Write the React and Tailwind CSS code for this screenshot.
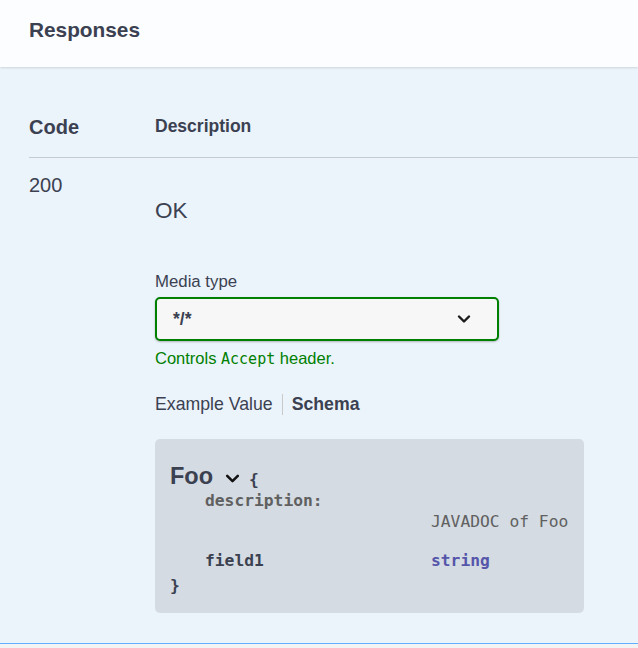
import React from 'react';

const sans = { fontFamily: '"Liberation Sans", Arial, sans-serif' };

function Chevron({ className }) {
  return (
    <svg viewBox="0 0 16 16" className={className} fill="none" stroke="currentColor" strokeWidth="2.4" strokeLinecap="round" strokeLinejoin="round">
      <path d="M3 5.5l5 5 5-5" />
    </svg>
  );
}

export default function App() {
  return (
    <div className="min-h-[648px] w-[638px] overflow-hidden bg-[#f3f3f3] text-[#3b4151]" style={sans}>
      <div className="border-b border-[#61affe] bg-[#ebf3fb] pb-[30px]">
        <div className="flex h-[67px] items-center bg-[#fbfdfe] px-[29px] pb-[8px] shadow-[0_1px_2px_rgba(0,0,0,0.12)]">
          <h4 className="text-[20.8px] font-bold">Responses</h4>
        </div>

        <div className="pl-[29px]">
          <div className="flex items-center border-b border-[#c5cad3] pt-[48px] pb-[18px]">
            <div className="w-[126px] text-[20px] font-bold leading-[24px]">Code</div>
            <div className="text-[17.5px] font-bold leading-[24px] -mt-[2px]">Description</div>
          </div>

          <div className="flex">
            <div className="w-[126px] pt-[15px] text-[20px] leading-[24px]">200</div>
            <div className="flex flex-col">
              <div className="mt-[39px] text-[22.5px] leading-[28px]">OK</div>

              <div className="mt-[46px] text-[16.8px] leading-[22px]">Media type</div>
              <div className="mt-[4px] flex h-[44px] w-[344px] items-center justify-between rounded-[5px] border-2 border-[#008000] bg-[#f7f7f7] pl-[16px] pr-[25px] shadow-[0_1px_2px_rgba(0,0,0,0.25)]">
                <span className="text-[17.5px] font-bold">*/*</span>
                <Chevron className="h-[16px] w-[16px] text-[#1b1b1b]" />
              </div>
              <div className="mt-[6px] text-[16.5px] leading-[22px] text-[#008000]">
                Controls <code className="font-['DejaVu_Sans_Mono',monospace] text-[15px]">Accept</code> header.
              </div>

              <div className="mt-[22px] flex items-center text-[17.7px] leading-[24px]">
                <span>Example Value</span>
                <span className="mx-[9px] h-[21px] w-px bg-[#c9c9c9]" />
                <span className="font-bold">Schema</span>
              </div>

              <div className="mt-[23px] w-[429px] rounded-[5px] bg-[#d4dbe2] pt-[25px] pb-[16px] pl-[15px] font-['DejaVu_Sans_Mono',monospace] text-[16.3px]">
                <div className="flex h-[26px] items-center">
                  <span className="text-[23.5px] font-bold" style={sans}>Foo</span>
                  <Chevron className="ml-[11px] mt-[2px] h-[17px] w-[17px] text-[#111]" />
                  <span className="ml-[8px] mt-[6px] font-bold">{'{'}</span>
                </div>
                <div className="flex pl-[35px]">
                  <div className="w-[226px] font-bold leading-[22px] text-[#606060]">description:</div>
                </div>
                <div className="flex pl-[35px]">
                  <div className="w-[226px]" />
                  <div className="leading-[20px] text-[#606060]">JAVADOC of Foo</div>
                </div>
                <div className="mt-[18px] flex pl-[35px]">
                  <div className="w-[226px] font-bold leading-[22px] text-[#3b4151]">field1</div>
                  <div className="font-bold leading-[22px] text-[#55a]">string</div>
                </div>
                <div className="mt-[3px] font-bold leading-[22px]">{'}'}</div>
              </div>
            </div>
          </div>
        </div>
      </div>
    </div>
  );
}
